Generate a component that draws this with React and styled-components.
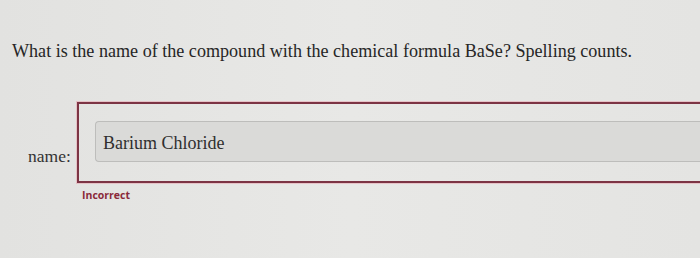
import React from 'react'
import styled, { createGlobalStyle } from 'styled-components'

const GlobalStyle = createGlobalStyle`
    html, body {
        margin: 0;
        padding: 0;
        background: #e4e4e2;
        overflow: hidden;
    }
`

const Page = styled.div`
    width: 700px;
    height: 258px;
    overflow: hidden;
    background: linear-gradient(90deg, #e2e2e0 0%, #e8e8e6 50%, #e4e4e2 100%);
    font-family: "Liberation Serif", "Times New Roman", serif;
    color: #2a2a2a;
`

const Question = styled.p`
    margin: 0;
    padding: 39px 0 0 12px;
    font-size: 18.1px;
    line-height: 24px;
    white-space: nowrap;
    color: #262626;
`

const AnswerRow = styled.div`
    display: flex;
    align-items: flex-start;
    margin-top: 39px;
`

const Label = styled.label`
    flex-shrink: 0;
    width: 49px;
    padding-left: 28px;
    margin-top: 44px;
    font-size: 17.5px;
    line-height: 20px;
    color: #333;
`

const FieldGroup = styled.div`
    display: flex;
    flex-direction: column;
`

const ErrorBox = styled.div`
    width: 660px;
    padding: 17px 0 19px 16px;
    border: 2px solid #7c3444;
    border-right: none;
    box-shadow: 0 0 0 1px rgba(230, 150, 165, 0.45);
`

const AnswerInput = styled.div`
    height: 41px;
    box-sizing: border-box;
    padding: 3px 7px 0;
    display: flex;
    align-items: center;
    background: #dadad8;
    border: 1px solid #bdbdbb;
    border-right: none;
    border-radius: 4px 0 0 4px;
    font-size: 18px;
    color: #2f2f2f;
`

const Feedback = styled.span`
    margin-top: 5px;
    padding-left: 5px;
    font-family: "Open Sans", "Liberation Sans", sans-serif;
    font-size: 10.5px;
    font-weight: 700;
    color: #8a2a3a;
`

export default function App() {
    return (
        <Page>
            <GlobalStyle />
            <Question>What is the name of the compound with the chemical formula BaSe? Spelling counts.</Question>
            <AnswerRow>
                <Label>name:</Label>
                <FieldGroup>
                    <ErrorBox>
                        <AnswerInput>Barium Chloride</AnswerInput>
                    </ErrorBox>
                    <Feedback>Incorrect</Feedback>
                </FieldGroup>
            </AnswerRow>
        </Page>
    )
}
